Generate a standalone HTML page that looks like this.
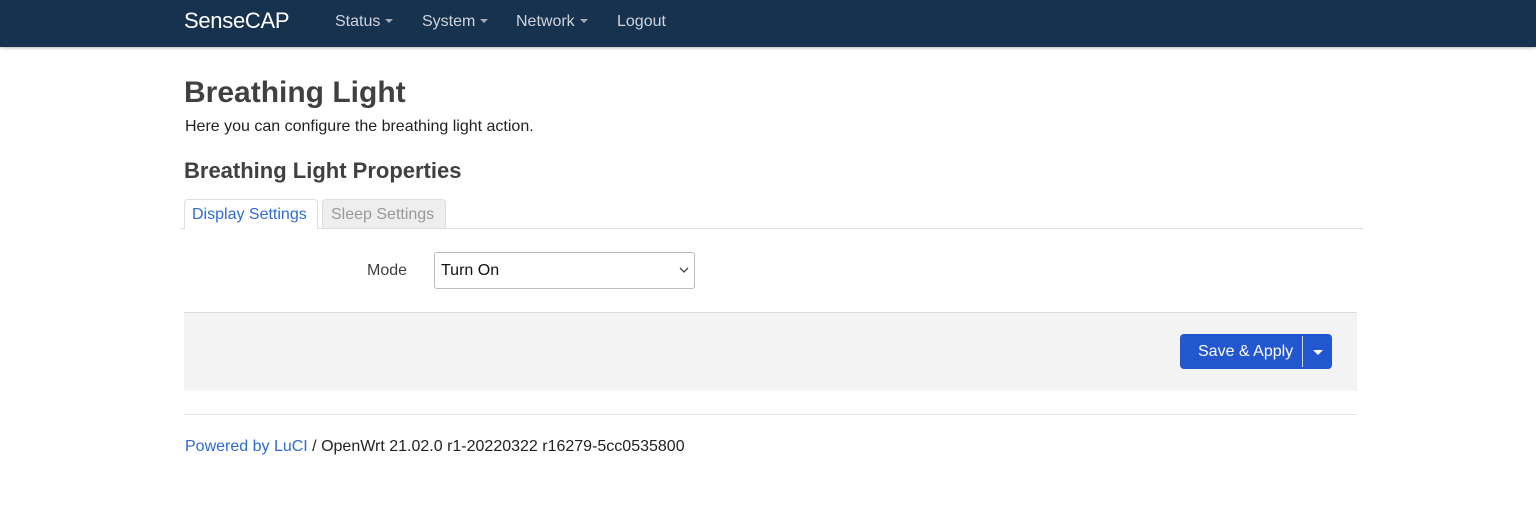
<!DOCTYPE html>
<html><head><meta charset="utf-8"><style>
*{box-sizing:border-box;margin:0;padding:0}
body{width:1536px;height:510px;background:#fff;font-family:"Liberation Sans",sans-serif;color:#404040;position:relative;overflow:hidden}
.nav{position:absolute;left:0;top:0;width:1536px;height:47px;background:#17324f;box-shadow:0 1px 3px rgba(0,0,0,.3)}
.nav span{position:absolute;top:13px;font-size:16px;color:#d0d4da}
.logo{left:184px;top:8px!important;font-size:22px!important;color:#fff!important;letter-spacing:-0.3px}
.car{display:inline-block;width:0;height:0;border-left:4px solid transparent;border-right:4px solid transparent;border-top:4px solid #aab;margin-left:5px;vertical-align:3px}
.abs{position:absolute}
</style></head><body>
<div class="nav">
<span class="logo">SenseCAP</span>
<span style="left:335px">Status<i class="car"></i></span>
<span style="left:422px">System<i class="car"></i></span>
<span style="left:516px">Network<i class="car"></i></span>
<span style="left:617px">Logout</span>
</div>
<div class="abs" style="left:184px;top:76px;font-size:30px;font-weight:bold;color:#404040">Breathing Light</div>
<div class="abs" style="left:185px;top:118px;font-size:16px;color:#222">Here you can configure the breathing light action.</div>
<div class="abs" style="left:184px;top:158px;font-size:22px;font-weight:bold;color:#404040">Breathing Light Properties</div>
<div class="abs" style="left:180px;top:228px;width:1183px;height:1px;background:#ddd"></div>
<div class="abs" style="left:184px;top:199px;width:134px;height:30px;border:1px solid #ddd;border-bottom:none;border-radius:4px 4px 0 0;background:#fff;color:#2f6bd0;font-size:16px;padding:6px 0 0 7px">Display Settings</div>
<div class="abs" style="left:322px;top:199px;width:124px;height:29px;border:1px solid #ddd;border-bottom:none;border-radius:4px 4px 0 0;background:#eee;color:#999;font-size:16px;padding:6px 0 0 8px">Sleep Settings</div>
<div class="abs" style="left:367px;top:262px;font-size:16px;color:#404040">Mode</div>
<div class="abs" style="left:434px;top:252px;width:261px;height:37px;border:1px solid #bbb;border-radius:3px;font-size:16px;color:#111;padding:9px 0 0 6px">Turn On
<svg style="position:absolute;right:5px;top:14px" width="10" height="7" viewBox="0 0 10 7"><path d="M1 1l4 4 4-4" stroke="#444" stroke-width="1.3" fill="none"/></svg></div>
<div class="abs" style="left:184px;top:312px;width:1173px;height:79px;background:#f3f3f3;border-top:1px solid #ddd"></div>
<div class="abs" style="left:1180px;top:334px;width:152px;height:35px;background:#2357d0;border-radius:4px;color:#fff;font-size:16px;padding:9px 0 0 18px">Save &amp; Apply
<div style="position:absolute;left:122px;top:2px;width:1px;height:31px;background:#c8d4f2"></div>
<div style="position:absolute;left:133px;top:16px;border-left:5px solid transparent;border-right:5px solid transparent;border-top:5px solid #fff"></div></div>
<div class="abs" style="left:184px;top:414px;width:1173px;height:1px;background:#e5e5e5"></div>
<div class="abs" style="left:185px;top:438px;font-size:16px;color:#222"><span style="color:#2f6bd0">Powered by LuCI</span> / OpenWrt 21.02.0 r1-20220322 r16279-5cc0535800</div>
</body></html>
